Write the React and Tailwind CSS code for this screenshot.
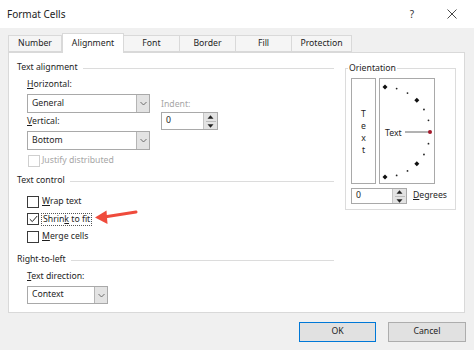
import React from "react"

const font = { fontFamily: '"Noto Sans", "Open Sans", sans-serif' }

function GroupHeader({ label }) {
  return (
    <div className="flex items-center h-[14px]">
      <span className="whitespace-nowrap text-[#1e1e1e]">{label}</span>
      <div className="flex-1 h-px bg-[#dcdcdc] ml-[5px]" />
    </div>
  )
}

function Chevron() {
  return (
    <svg width="7" height="5" viewBox="0 0 7 5">
      <path d="M0.5 1 L3.5 4 L6.5 1" fill="none" stroke="#606060" strokeWidth="0.9" />
    </svg>
  )
}

function Select({ value, w, h = "h-[19px]" }) {
  return (
    <div className={`flex ${w} ${h} border border-[#a9a9a9] bg-white`}>
      <div className="flex-1 flex items-center pl-[4px] text-[#1e1e1e]">{value}</div>
      <div className="w-[13px] flex items-center justify-center bg-[#e3e3e3] border-l border-[#b5b5b5]">
        <Chevron />
      </div>
    </div>
  )
}

function Spinner() {
  return (
    <div className="w-[14px] flex flex-col items-center justify-center gap-[2px] bg-[#e3e3e3] border-l border-[#c4c4c4]">
      <svg width="7" height="4" viewBox="0 0 7 4"><path d="M0.5 3.8 L3.5 0.3 L6.5 3.8 Z" fill="#222" /></svg>
      <div className="w-[10px] h-px bg-[#bcbcbc]" />
      <svg width="7" height="4" viewBox="0 0 7 4"><path d="M0.5 0.2 L3.5 3.7 L6.5 0.2 Z" fill="#222" /></svg>
    </div>
  )
}

function NumberBox({ w, h }) {
  return (
    <div className={`flex ${w} ${h} border border-[#a9a9a9] bg-white`}>
      <div className="flex-1 flex items-center pl-[4px] text-[#1e1e1e]">0</div>
      <Spinner />
    </div>
  )
}

function Checkbox({ checked, disabled }) {
  return (
    <div
      className={`w-[12px] h-[12px] border bg-white flex items-center justify-center ${
        disabled ? "border-[#cfcfcf]" : "border-[#3a3a3a]"
      }`}
    >
      {checked && (
        <svg width="9" height="8" viewBox="0 0 9 8">
          <path d="M0.8 4.2 L3.3 6.6 L8.2 1" fill="none" stroke="#222" strokeWidth="1" />
        </svg>
      )}
    </div>
  )
}

function Orientation() {
  const cx = 6
  const cy = 54
  const r = 45
  const dots = []
  for (let a = 90; a >= -90; a -= 15) {
    if (a === 0) continue
    const rad = (a * Math.PI) / 180
    const x = cx + r * Math.cos(rad)
    const y = cy - r * Math.sin(rad)
    const big = a % 45 === 0
    dots.push(
      big ? (
        <path key={a} d={`M${x} ${y - 2.5} L${x + 2.5} ${y} L${x} ${y + 2.5} L${x - 2.5} ${y} Z`} fill="#111" />
      ) : (
        <circle key={a} cx={x} cy={y} r="0.9" fill="#222" />
      )
    )
  }
  return (
    <div className="relative w-[111px] h-[142px] border border-[#dcdcdc] mt-[7px]">
      <span className="absolute left-[2px] top-[-8px] bg-white px-[1px] text-[#1e1e1e] leading-[14px]">Orientation</span>
      <div className="flex gap-[3px] pl-[5px] pt-[9px]">
        <div className="w-[25px] h-[106px] border border-[#a9a9a9] flex flex-col items-center justify-center text-[#1e1e1e] leading-[12px] pt-[2px]">
          <span>T</span>
          <span>e</span>
          <span>x</span>
          <span>t</span>
        </div>
        <div className="w-[56px] h-[106px] border border-[#a9a9a9]">
          <svg width="54" height="104" viewBox="1 1 54 104">
            {dots}
            <text x="6" y="57.5" fontSize="8.7" fill="#1e1e1e" style={font}>Text</text>
            <line x1="26" y1="54" x2="50" y2="54" stroke="#555" strokeWidth="0.9" />
            <circle cx="51" cy="54" r="2" fill="#a3192b" />
          </svg>
        </div>
      </div>
      <div className="flex items-center pl-[5px] mt-[4px]">
        <NumberBox w="w-[56px]" h="h-[16px]" />
        <span className="ml-[6px] text-[#1e1e1e]"><u>D</u>egrees</span>
      </div>
    </div>
  )
}

export default function App() {
  const tabs = ["Number", "Alignment", "Font", "Border", "Fill", "Protection"]
  const widths = ["w-[54px]", "w-[62px]", "w-[56px]", "w-[56px]", "w-[56px]", "w-[60px]"]
  return (
    <div className="relative w-[474px] h-[350px] bg-[#f0f0f0] overflow-hidden text-[8.7px]" style={font}>
      <div className="h-[28px] bg-white flex items-center pl-[7px] pr-[17px]">
        <span className="text-[10px] text-[#222]">Format Cells</span>
        <span className="ml-auto text-[10px] text-[#333]">?</span>
        <svg className="ml-[33px]" width="10" height="10" viewBox="0 0 10 10">
          <path d="M0.5 0.5 L9.5 9.5 M9.5 0.5 L0.5 9.5" stroke="#333" strokeWidth="0.9" />
        </svg>
      </div>

      <div className="flex items-end h-[19px] mt-[5px] pl-[8px]">
        {tabs.map((t, i) =>
          t === "Alignment" ? (
            <div
              key={t}
              className={`${widths[i]} h-[20px] -mb-px relative z-10 bg-white border border-b-0 border-[#d9d9d9] flex items-center justify-center text-[#1e1e1e]`}
            >
              {t}
            </div>
          ) : (
            <div
              key={t}
              className={`${widths[i]} h-[17px] bg-[#f5f5f5] border border-l-0 first:border-l border-[#d9d9d9] flex items-center justify-center text-[#1e1e1e]`}
            >
              {t}
            </div>
          )
        )}
      </div>

      <div className="ml-[8px] w-[457px] h-[261px] bg-white border border-[#d9d9d9] flex pl-[8px] pt-[8px]">
        <div className="w-[317px] flex flex-col">
          <GroupHeader label="Text alignment" />
          <div className="flex pl-[10px]">
            <div className="w-[123px] flex flex-col">
              <div className="h-[14px] mt-[3px] flex items-center text-[#1e1e1e]"><span><u>H</u>orizontal:</span></div>
              <div className="mt-[2px]"><Select value="General" w="w-[123px]" /></div>
              <div className="h-[14px] mt-[2px] flex items-center text-[#1e1e1e]"><span><u>V</u>ertical:</span></div>
              <div className="mt-[2px]"><Select value="Bottom" w="w-[123px]" /></div>
            </div>
            <div className="ml-[11px] pt-[23px] flex flex-col">
              <div className="h-[14px] flex items-center text-[#a6a6a6]">Indent:</div>
              <NumberBox w="w-[57px]" h="h-[18px]" />
            </div>
          </div>
          <div className="flex items-center gap-[2px] pl-[11px] mt-[4px] h-[13px]">
            <Checkbox disabled />
            <span className="text-[#a6a6a6]">Justify distributed</span>
          </div>

          <div className="mt-[7px]"><GroupHeader label="Text control" /></div>
          <div className="flex flex-col pl-[10px] mt-[5px]">
            <div className="flex items-center gap-[3px] h-[17px]">
              <Checkbox />
              <span className="text-[#1e1e1e]"><u>W</u>rap text</span>
            </div>
            <div className="flex items-center gap-[2px] h-[18px]">
              <Checkbox checked />
              <span className="text-[#1e1e1e] border border-dotted border-[#555] px-px leading-[11px]">Shrin<u>k</u> to fit</span>
            </div>
            <div className="flex items-center gap-[3px] h-[17px]">
              <Checkbox />
              <span className="text-[#1e1e1e]"><u>M</u>erge cells</span>
            </div>
          </div>

          <div className="mt-[8px]"><GroupHeader label="Right-to-left" /></div>
          <div className="pl-[10px] flex flex-col">
            <div className="h-[14px] mt-[3px] flex items-center text-[#1e1e1e]"><span><u>T</u>ext direction:</span></div>
            <div className="mt-[2px]"><Select value="Context" w="w-[81px]" h="h-[18px]" /></div>
          </div>
        </div>

        <div className="ml-[11px]">
          <Orientation />
        </div>
      </div>

      <div className="flex justify-end gap-[12px] pr-[8px] mt-[9px]">
        <button className="w-[77px] h-[20px] bg-[#e1e1e1] border border-[#0078d7] text-[#1e1e1e]">OK</button>
        <button className="w-[78px] h-[20px] bg-[#e1e1e1] border border-[#adadad] text-[#1e1e1e]">Cancel</button>
      </div>

      <svg className="absolute left-[92px] top-[205px]" width="48" height="22" viewBox="92 205 48 22">
        <path d="M104 217 L136 212" stroke="#ef4b3c" strokeWidth="3" strokeLinecap="round" />
        <path d="M95 217.5 L106.5 210.5 L107.5 224 Z" fill="#ef4b3c" />
      </svg>
    </div>
  )
}
